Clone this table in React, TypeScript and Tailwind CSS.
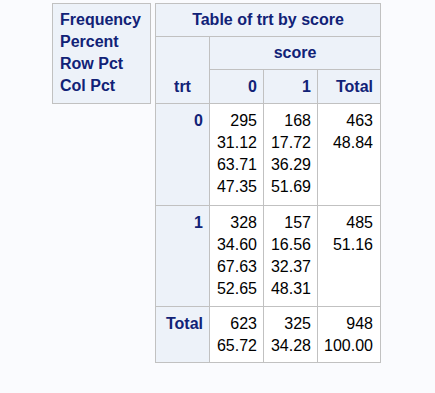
import React from 'react';

type Row = { label: string; cells: string[][] };

const rows: Row[] = [
  { label: '0', cells: [['295', '31.12', '63.71', '47.35'], ['168', '17.72', '36.29', '51.69'], ['463', '48.84']] },
  { label: '1', cells: [['328', '34.60', '67.63', '52.65'], ['157', '16.56', '32.37', '48.31'], ['485', '51.16']] },
  { label: 'Total', cells: [['623', '65.72'], ['325', '34.28'], ['948', '100.00']] },
];

const head = 'bg-[#edf2f9] text-[#112277] font-bold border-r border-b border-[#c1c1c1]';
const data = 'bg-white text-black border-r border-b border-[#c1c1c1] text-right align-top px-[6px]';

export default function App() {
  return (
    <div className="min-h-screen bg-[#fafbfe] pl-[52px] pt-[3px] font-['Liberation_Sans',Arial,sans-serif] text-[16px] leading-[22px]">
      <div className="flex items-start gap-[4px]">
        {/* legend */}
        <div className="w-[99px] h-[101px] border border-[#c1c1c1] bg-[#edf2f9] text-[#112277] font-bold pl-[7px] pt-[5px]">
          <div>Frequency</div>
          <div>Percent</div>
          <div>Row Pct</div>
          <div>Col Pct</div>
        </div>

        <table className="border-separate border-spacing-0 border-t border-l border-[#c1c1c1]">
          <colgroup>
            <col className="w-[54px]" />
            <col className="w-[54px]" />
            <col className="w-[54px]" />
            <col className="w-[63px]" />
          </colgroup>
          <thead>
            <tr>
              <th colSpan={4} className={`${head} text-center py-[5px]`}>Table of trt by score</th>
            </tr>
            <tr>
              <th rowSpan={2} className={`${head} text-center align-bottom pt-[6px] pb-[5px]`}>trt</th>
              <th colSpan={3} className={`${head} text-center py-[5px]`}>score</th>
            </tr>
            <tr>
              <th className={`${head} text-right px-[6px] pt-[6px] pb-[5px]`}>0</th>
              <th className={`${head} text-right px-[6px] pt-[6px] pb-[5px]`}>1</th>
              <th className={`${head} text-right px-[7px] pt-[6px] pb-[5px]`}>Total</th>
            </tr>
          </thead>
          <tbody>
            {rows.map((r, i) => {
              const pad = i === 0 ? 'pt-[6px] pb-[7px]' : i === 1 ? 'pt-[6px] pb-[6px]' : 'pt-[6px] pb-[5px]';
              return (
                <tr key={r.label}>
                  <th className={`${head} text-right align-top px-[6px] ${pad}`}>{r.label}</th>
                  {r.cells.map((c, j) => (
                    <td key={j} className={`${data} ${pad} ${j === 2 ? 'pr-[7px]' : ''}`}>
                      {c.map((v, k) => (
                        <div key={k}>{v}</div>
                      ))}
                    </td>
                  ))}
                </tr>
              );
            })}
          </tbody>
        </table>
      </div>
    </div>
  );
}
